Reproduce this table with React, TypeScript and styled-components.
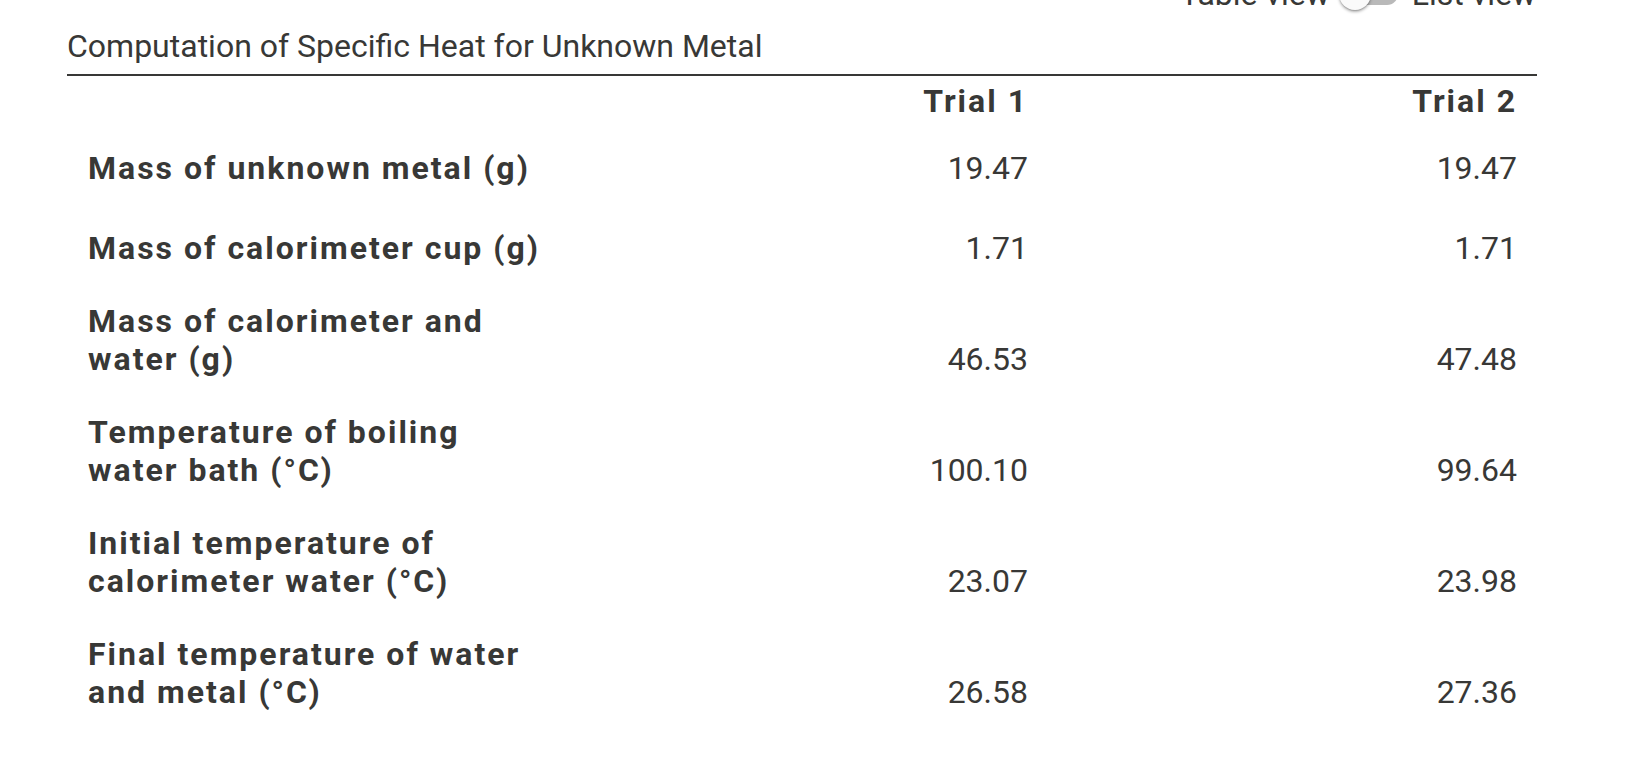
import React from "react";
import styled, { createGlobalStyle } from "styled-components";

const Global = createGlobalStyle`
  html, body { margin: 0; padding: 0; background: #ffffff; }
  body { font-family: Roboto, "Liberation Sans", Arial, sans-serif; color: #383836; }
`;

const Page = styled.div`
  width: 1470px;
  margin-left: 67px;
  overflow: visible;
`;

const ToggleBar = styled.div`
  display: flex;
  justify-content: flex-end;
  align-items: center;
  gap: 14px;
  height: 38px;
  margin-top: -25px;
  padding-right: 1px;
  font-size: 32px;
  line-height: 38px;
`;

const ToggleLabel = styled.span`
  color: #383836;
`;

const Track = styled.span`
  position: relative;
  display: inline-block;
  width: 54px;
  height: 22px;
  border-radius: 11px;
  background: #b9b9b9;
`;

const Knob = styled.span`
  position: absolute;
  left: -5px;
  top: -5px;
  width: 32px;
  height: 32px;
  border-radius: 50%;
  background: #fafafa;
  box-shadow: 0 2px 3px rgba(0, 0, 0, 0.3), 0 1px 1px rgba(0, 0, 0, 0.14);
`;

const Title = styled.h2`
  margin: 14px 0 0;
  padding-bottom: 9px;
  font-size: 32px;
  line-height: 38px;
  font-weight: 400;
  color: #383836;
  border-bottom: 2px solid #383836;
`;

const Table = styled.div`
  display: grid;
  grid-template-columns: 1fr 270px 489px;
`;

const Row = styled.div`
  display: contents;
`;

const Cell = styled.div<{ $header?: boolean; $label?: boolean }>`
  display: flex;
  align-items: flex-end;
  justify-content: ${(p) => (p.$label ? "flex-start" : "flex-end")};
  padding: ${(p) =>
    p.$header ? "6px 20px 5px" : p.$label ? "17px 21px 18px" : "17px 20px 18px"};
  min-height: ${(p) => (p.$header ? "0" : "45px")};
  font-size: 32px;
  line-height: 38px;
  font-weight: ${(p) => (p.$header || p.$label ? 700 : 400)};
  letter-spacing: ${(p) => (p.$header || p.$label ? "2px" : "0")};
  color: #383836;
`;

const LabelText = styled.span`
  max-width: 460px;
`;

const rows: [string, string, string][] = [
  ["Mass of unknown metal (g)", "19.47", "19.47"],
  ["Mass of calorimeter cup (g)", "1.71", "1.71"],
  ["Mass of calorimeter and water (g)", "46.53", "47.48"],
  ["Temperature of boiling water bath (°C)", "100.10", "99.64"],
  ["Initial temperature of calorimeter water (°C)", "23.07", "23.98"],
  ["Final temperature of water and metal (°C)", "26.58", "27.36"],
];

export default function App() {
  return (
    <>
      <Global />
      <Page>
        <ToggleBar>
          <ToggleLabel>Table view</ToggleLabel>
          <Track>
            <Knob />
          </Track>
          <ToggleLabel>List view</ToggleLabel>
        </ToggleBar>
        <Title>Computation of Specific Heat for Unknown Metal</Title>
        <Table>
          <Row>
            <Cell $header $label />
            <Cell $header>Trial 1</Cell>
            <Cell $header>Trial 2</Cell>
          </Row>
          {rows.map(([label, a, b]) => (
            <Row key={label}>
              <Cell $label>
                <LabelText>{label}</LabelText>
              </Cell>
              <Cell>{a}</Cell>
              <Cell>{b}</Cell>
            </Row>
          ))}
        </Table>
      </Page>
    </>
  );
}
